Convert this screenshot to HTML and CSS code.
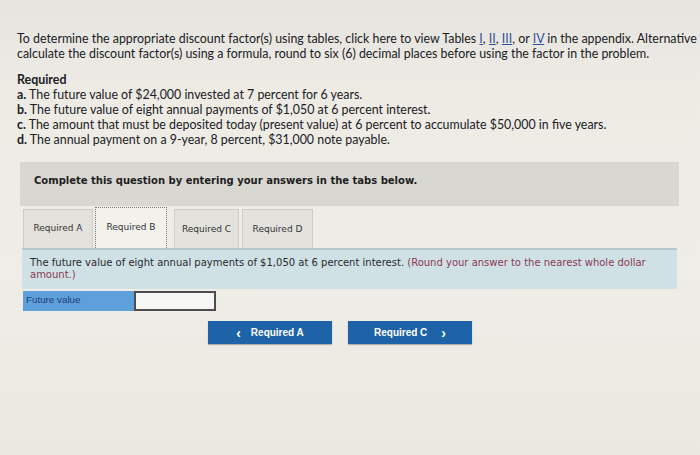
FILE: index.html
```html
<!DOCTYPE html>
<html>
<head>
<meta charset="utf-8">
<link rel="stylesheet" href="styles.css">
</head>
<body>
<div class="page">
  <div class="intro">
    <p class="line">To determine the appropriate discount factor(s) using tables, click here to view Tables <a href="#">I</a>, <a href="#">II</a>, <a href="#">III</a>, or <a href="#">IV</a> in the appendix. Alternative</p>
    <p class="line">calculate the discount factor(s) using a formula, round to six (6) decimal places before using the factor in the problem.</p>
  </div>
  <div class="required">
    <p class="req-title">Required</p>
    <p class="line"><b>a.</b> The future value of $24,000 invested at 7 percent for 6 years.</p>
    <p class="line"><b>b.</b> The future value of eight annual payments of $1,050 at 6 percent interest.</p>
    <p class="line"><b>c.</b> The amount that must be deposited today (present value) at 6 percent to accumulate $50,000 in five years.</p>
    <p class="line"><b>d.</b> The annual payment on a 9-year, 8 percent, $31,000 note payable.</p>
  </div>
  <div class="instr">Complete this question by entering your answers in the tabs below.</div>
  <div class="tabs">
    <div class="tab tab-a">Required A</div>
    <div class="tab tab-b active">Required B</div>
    <div class="tab tab-c">Required C</div>
    <div class="tab tab-d">Required D</div>
  </div>
  <div class="panel">
    <p class="panel-text">The future value of eight annual payments of $1,050 at 6 percent interest. <span class="note">(Round your answer to the nearest whole dollar</span></p>
    <p class="panel-text note">amount.)</p>
  </div>
  <div class="answer">
    <div class="label">Future value</div>
    <div class="input"></div>
  </div>
  <div class="nav">
    <div class="btn"><span class="chev">&lsaquo;</span>Required A</div>
    <div class="btn">Required C<span class="chev right">&rsaquo;</span></div>
  </div>
</div>
</body>
</html>
```

FILE: styles.css
```css
html, body {
  margin: 0;
  padding: 0;
  background: #ebe9e3;
  overflow: hidden;
}
.page {
  width: 700px;
  height: 455px;
  overflow: hidden;
  background: linear-gradient(180deg, #e6e4df 0%, #eeebe5 20%, #efede7 60%, #ebe8e1 100%);
  padding-top: 31px;
  box-sizing: border-box;
}
.intro, .required {
  padding-left: 17px;
  font-family: Lato, "Open Sans", sans-serif;
  font-size: 12.4px;
  color: #202024;
}
.line {
  margin: 0;
  white-space: nowrap;
  line-height: 15px;
}
.intro a {
  color: #2f4f9a;
  text-decoration: underline;
}
.required {
  margin-top: 11px;
}
.req-title {
  margin: 0;
  font-weight: bold;
  line-height: 15px;
}
.required b {
  font-weight: bold;
}
.instr {
  margin: 15px 0 0 20px;
  width: 659px;
  height: 44px;
  box-sizing: border-box;
  background: #d9d7d1;
  font-family: "DejaVu Sans", Verdana, sans-serif;
  font-weight: bold;
  font-size: 10px;
  color: #1e1e1e;
  padding: 13px 0 0 14px;
}
.tabs {
  display: flex;
  align-items: flex-end;
  margin: 1px 0 0 23px;
  height: 41px;
}
.tab {
  box-sizing: border-box;
  height: 39px;
  background: #e4e2dc;
  border: 1px solid #cfcdc7;
  border-bottom: none;
  font-family: "DejaVu Sans", Verdana, sans-serif;
  font-size: 9px;
  color: #333;
  display: flex;
  align-items: center;
  justify-content: center;
  padding-bottom: 2px;
}
.tab-a { width: 70px; }
.tab-b { width: 72px; margin-left: 2px; height: 41px; }
.tab-c { width: 65px; margin-left: 7px; padding-bottom: 0; }
.tab-d { width: 71px; margin-left: 3px; padding-bottom: 0; }
.tab.active {
  background: #f2f1ec;
  border: 1px dotted #777;
  border-bottom: none;
}
.panel {
  margin-left: 22px;
  width: 655px;
  height: 41px;
  box-sizing: border-box;
  background: #d0e1e6;
  border-top: 2px solid #b7c7cb;
  padding: 7px 20px 0 8px;
}
.panel-text {
  margin: 0;
  white-space: nowrap;
  font-family: "DejaVu Sans", Verdana, sans-serif;
  font-size: 10px;
  line-height: 12px;
  color: #2a2a2a;
}
.note,
.panel-text.note {
  color: #8a3a50;
}
.answer {
  display: flex;
  margin: 2px 0 0 23px;
  height: 20px;
}
.label {
  width: 111px;
  background: #5ea0da;
  color: #20407a;
  font-family: "Liberation Sans", Arial, sans-serif;
  font-size: 9.8px;
  padding: 3px 0 0 3px;
  box-sizing: border-box;
}
.input {
  width: 82px;
  background: #f6f6f4;
  border: 2px solid #4d4d4f;
  box-sizing: border-box;
}
.nav {
  display: flex;
  margin: 10px 0 0 208px;
  gap: 16px;
}
.btn {
  width: 124px;
  height: 23px;
  background: #1e63a7;
  color: #fff;
  font-family: "Liberation Sans", Arial, sans-serif;
  font-weight: bold;
  font-size: 10px;
  display: flex;
  align-items: center;
  justify-content: center;
  box-shadow: 0 1px 1px rgba(0,0,0,0.25);
}
.chev {
  font-size: 14px;
  margin-right: 10px;
  line-height: 10px;
}
.chev.right {
  margin-right: 0;
  margin-left: 14px;
}
```
